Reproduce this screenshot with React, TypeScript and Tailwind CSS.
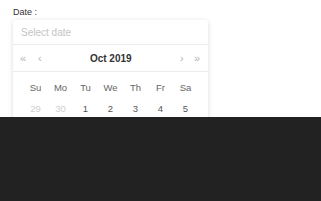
const weekDays = ['Su', 'Mo', 'Tu', 'We', 'Th', 'Fr', 'Sa'];
const firstRow = [
  { d: '29', muted: true },
  { d: '30', muted: true },
  { d: '1' },
  { d: '2' },
  { d: '3' },
  { d: '4' },
  { d: '5' },
];

export default function App() {
  return (
    <div className="flex h-[201px] w-[321px] flex-col overflow-hidden bg-white font-['Liberation_Sans',Arial,sans-serif]">
      <div className="h-[117px] shrink-0 overflow-hidden px-[13px] pt-[6px]">
        <div className="text-[9px] leading-[12px] text-[#333]">Date :</div>
        {/* calendar popup, cut off by the dark panel below */}
        <div className="mt-[2px] w-[195px] rounded-[3px] bg-white shadow-[0_1px_5px_rgba(0,0,0,0.15)]">
          <div className="flex h-[25px] items-center border-b border-[#ececec] px-[8px] text-[10px] text-[#c4c4c4]">
            Select date
          </div>
          <div className="flex h-[27px] items-center border-b border-[#ececec] pl-[7px] pr-[8px] text-[#b5b5b5]">
            <span className="w-[18px] text-[11px]">«</span>
            <span className="text-[11px]">‹</span>
            <span className="flex-1 text-center text-[10px] font-bold text-[#333]">Oct 2019</span>
            <span className="w-[14px] text-[11px]">›</span>
            <span className="text-[11px]">»</span>
          </div>
          <div className="px-[10px] pt-[8px]">
            <div className="grid grid-cols-7 text-center text-[9.5px] leading-[16px] text-[#666]">
              {weekDays.map((w) => (
                <span key={w}>{w}</span>
              ))}
            </div>
            <div className="mt-[5px] grid grid-cols-7 text-center text-[9.5px] leading-[16px]">
              {firstRow.map((c) => (
                <span key={c.d} className={c.muted ? 'text-[#cfcfcf]' : 'text-[#555]'}>
                  {c.d}
                </span>
              ))}
            </div>
            <div className="h-[40px]" />
          </div>
        </div>
      </div>
      <div className="flex-1 bg-[#222222]" />
    </div>
  );
}
